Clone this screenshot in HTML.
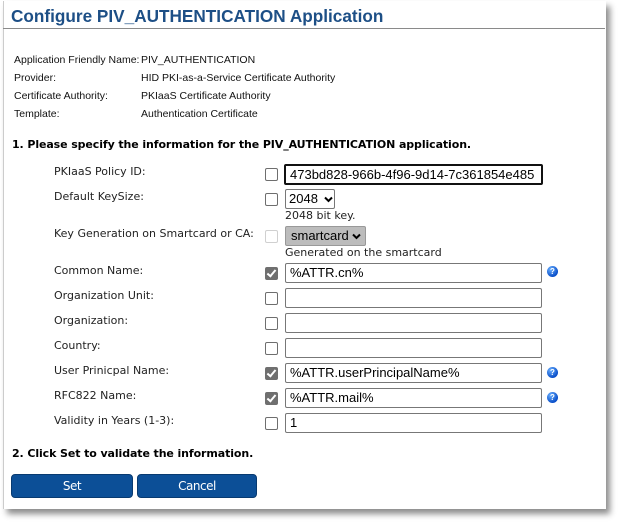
<!DOCTYPE html>
<html><head><style>
body{margin:0;width:621px;height:526px;background:#fff;position:relative;overflow:hidden;font-family:"Liberation Sans",sans-serif}
.panel{position:absolute;left:3px;top:1px;width:602px;height:508px;background:#fff;border-left:1px solid #ccc;box-shadow:4px 5px 6px rgba(0,0,0,.45)}
.a{position:absolute;white-space:nowrap}
.t{left:11px;top:6px;font-size:17.2px;font-weight:bold;color:#1d4f86;font-family:"Liberation Sans",sans-serif}
.sep{position:absolute;left:3px;top:28px;width:602px;height:1px;background:#8a8a8a}
.i{font-size:10.5px;color:#111;font-family:"Liberation Sans",sans-serif}
.h{font-size:11px;font-weight:bold;color:#000;font-family:"DejaVu Sans",sans-serif;letter-spacing:-0.1px}
.l{left:54px;font-size:11px;color:#222;font-family:"DejaVu Sans",sans-serif}
.cb{position:absolute;left:265px;width:11px;height:11px;border:1px solid #6e6e6e;border-radius:2px;background:#fff}
.cb.on{background:#6f6f6f;border-color:#6f6f6f}
.cb.on:after{content:"";position:absolute;left:3px;top:0px;width:3px;height:7px;border:solid #fff;border-width:0 2px 2px 0;transform:rotate(40deg)}
.cb.dis{border-color:#d0d0d0}
.in{position:absolute;left:285px;width:251px;height:18px;border:1px solid #777;border-radius:2px;font-size:13px;line-height:18px;padding-left:4px;color:#000;font-family:"Liberation Sans",sans-serif}
.in svg{position:absolute;top:6px}
.q{position:absolute;left:547px;width:11px;height:11px;border-radius:50%;background:radial-gradient(circle at 35% 30%,#6ab0ff,#0a4fc9 70%);color:#fff;font-size:8px;font-weight:bold;text-align:center;line-height:11px}
.btn{position:absolute;top:474px;height:22px;background:#0c4f97;border:1px solid #083a70;border-radius:4px;color:#fff;font-size:12px;text-align:center;line-height:22px;font-family:"DejaVu Sans",sans-serif;letter-spacing:-0.5px}
.sub{left:285px;font-size:11px;color:#222;font-family:"DejaVu Sans",sans-serif}
</style></head><body>
<div class="panel"></div>
<div class="a t">Configure PIV_AUTHENTICATION Application</div>
<div class="sep"></div>
<div class="a i" style="left:14px;top:54px">Application Friendly Name:</div><div class="a i" style="left:141px;top:54px">PIV_AUTHENTICATION</div>
<div class="a i" style="left:14px;top:72px">Provider:</div><div class="a i" style="left:141px;top:72px">HID PKI-as-a-Service Certificate Authority</div>
<div class="a i" style="left:14px;top:90px">Certificate Authority:</div><div class="a i" style="left:141px;top:90px">PKIaaS Certificate Authority</div>
<div class="a i" style="left:14px;top:108px">Template:</div><div class="a i" style="left:141px;top:108px">Authentication Certificate</div>
<div class="a h" style="left:12px;top:138px">1. Please specify the information for the PIV_AUTHENTICATION application.</div>

<div class="a l" style="top:165px">PKIaaS Policy ID:</div>
<div class="cb" style="top:168px"></div>
<div class="in" style="top:164px;border:2px solid #111;height:17px;width:251px;line-height:17px;left:284px;font-size:13px">473bd828-966b-4f96-9d14-7c361854e485</div>

<div class="a l" style="top:190px">Default KeySize:</div>
<div class="cb" style="top:193px"></div>
<div class="in" style="top:189px;width:45px;padding-left:3px">2048<svg style="left:38px" width="9" height="7" viewBox="0 0 9 7"><path d="M1 1.5L4.5 5 8 1.5" stroke="#000" stroke-width="2" fill="none"/></svg></div>
<div class="a sub" style="top:209px">2048 bit key.</div>

<div class="a l" style="top:227px">Key Generation on Smartcard or CA:</div>
<div class="cb dis" style="top:230px"></div>
<div class="in" style="top:226px;width:74px;background:#bcbcbc;border-color:#999;padding-left:5px">smartcard<svg style="left:66px" width="9" height="7" viewBox="0 0 9 7"><path d="M1 1.5L4.5 5 8 1.5" stroke="#000" stroke-width="2" fill="none"/></svg></div>
<div class="a sub" style="top:246px">Generated on the smartcard</div>

<div class="a l" style="top:264px">Common Name:</div>
<div class="cb on" style="top:267px"></div>
<div class="in" style="top:263px">%ATTR.cn%</div><div class="q" style="top:266px">?</div>

<div class="a l" style="top:289px">Organization Unit:</div>
<div class="cb" style="top:292px"></div><div class="in" style="top:288px"></div>

<div class="a l" style="top:314px">Organization:</div>
<div class="cb" style="top:317px"></div><div class="in" style="top:313px"></div>

<div class="a l" style="top:339px">Country:</div>
<div class="cb" style="top:342px"></div><div class="in" style="top:338px"></div>

<div class="a l" style="top:364px">User Prinicpal Name:</div>
<div class="cb on" style="top:367px"></div>
<div class="in" style="top:363px">%ATTR.userPrincipalName%</div><div class="q" style="top:367px">?</div>

<div class="a l" style="top:389px">RFC822 Name:</div>
<div class="cb on" style="top:392px"></div>
<div class="in" style="top:388px">%ATTR.mail%</div><div class="q" style="top:392px">?</div>

<div class="a l" style="top:414px">Validity in Years (1-3):</div>
<div class="cb" style="top:417px"></div>
<div class="in" style="top:413px">1</div>

<div class="a h" style="left:12px;top:447px">2. Click Set to validate the information.</div>
<div class="btn" style="left:11px;width:120px">Set</div>
<div class="btn" style="left:137px;width:118px">Cancel</div>
</body></html>
